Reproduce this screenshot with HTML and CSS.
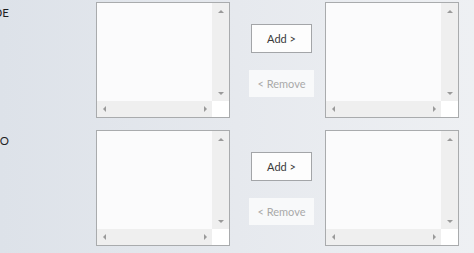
FILE: index.html
```html
<!DOCTYPE html>
<html>
<head>
<meta charset="utf-8">
<link rel="stylesheet" href="styles.css">
</head>
<body>
<div class="page">
  <div class="row">
    <div class="label"><div class="label-inner"><span class="label-text">CODE</span></div></div>
    <div class="listbox">
      <div class="list-area"></div>
      <div class="vscroll"><span class="arr up"></span><span class="arr down"></span></div>
      <div class="hscroll"><span class="arr left"></span><span class="arr right"></span></div>
      <div class="corner"></div>
    </div>
    <div class="buttons">
      <button class="btn btn-add">Add &gt;</button>
      <button class="btn btn-remove">&lt; Remove</button>
    </div>
    <div class="listbox">
      <div class="list-area"></div>
      <div class="vscroll"><span class="arr up"></span><span class="arr down"></span></div>
      <div class="hscroll"><span class="arr left"></span><span class="arr right"></span></div>
      <div class="corner"></div>
    </div>
  </div>
  <div class="row">
    <div class="label"><div class="label-inner"><span class="label-text">TODO</span></div></div>
    <div class="listbox">
      <div class="list-area"></div>
      <div class="vscroll"><span class="arr up"></span><span class="arr down"></span></div>
      <div class="hscroll"><span class="arr left"></span><span class="arr right"></span></div>
      <div class="corner"></div>
    </div>
    <div class="buttons">
      <button class="btn btn-add">Add &gt;</button>
      <button class="btn btn-remove">&lt; Remove</button>
    </div>
    <div class="listbox">
      <div class="list-area"></div>
      <div class="vscroll"><span class="arr up"></span><span class="arr down"></span></div>
      <div class="hscroll"><span class="arr left"></span><span class="arr right"></span></div>
      <div class="corner"></div>
    </div>
  </div>
</div>
</body>
</html>
```
FILE: styles.css
```css
html, body {
  margin: 0;
  padding: 0;
}
body {
  width: 474px;
  height: 253px;
  overflow: hidden;
  background: linear-gradient(to right, #dde2e9 0%, #e6e9ee 50%, #eef0f3 100%);
  font-family: Lato, "Open Sans", sans-serif;
  font-size: 11px;
  color: #222;
}
.page {
  display: flex;
  flex-direction: column;
  gap: 12px;
  padding-top: 2px;
}
.row {
  display: flex;
  align-items: stretch;
  height: 116px;
}
.label {
  width: 96px;
  flex: none;
  overflow: hidden;
  padding-top: 4px;
  box-sizing: border-box;
}
.label-inner {
  width: 9px;
  display: flex;
  justify-content: flex-end;
}
.label-text {
  flex: none;
  white-space: nowrap;
  font-size: 11.5px;
  line-height: 14px;
  color: #1e1e1e;
}
.listbox {
  width: 134px;
  height: 116px;
  flex: none;
  box-sizing: border-box;
  border: 1px solid #a9abad;
  background: #fafbfc;
  display: grid;
  grid-template-columns: 1fr 17px;
  grid-template-rows: 1fr 16px;
}
.list-area {
  background: #fbfbfc;
}
.vscroll {
  background: #efefef;
  display: flex;
  flex-direction: column;
  justify-content: space-between;
  align-items: center;
  padding: 7px 0 6px;
}
.hscroll {
  background: #efefef;
  display: flex;
  justify-content: space-between;
  align-items: center;
  padding: 0 5px 0 6px;
}
.corner {
  background: #ffffff;
}
.arr {
  width: 0;
  height: 0;
  display: block;
}
.arr.up {
  border-left: 3px solid transparent;
  border-right: 3px solid transparent;
  border-bottom: 3px solid #9a9a9a;
}
.arr.down {
  border-left: 3px solid transparent;
  border-right: 3px solid transparent;
  border-top: 3px solid #9a9a9a;
}
.arr.left {
  border-top: 3px solid transparent;
  border-bottom: 3px solid transparent;
  border-right: 3px solid #9a9a9a;
}
.arr.right {
  border-top: 3px solid transparent;
  border-bottom: 3px solid transparent;
  border-left: 3px solid #9a9a9a;
}
.buttons {
  width: 65px;
  flex: none;
  margin: 0 11px 0 19px;
  display: flex;
  flex-direction: column;
  justify-content: center;
  align-items: center;
  gap: 17px;
}
.btn {
  font-family: Lato, "Open Sans", sans-serif;
  font-size: 11px;
  font-weight: 400;
  padding: 0;
  margin: 0;
  box-sizing: border-box;
  cursor: default;
}
.btn-add {
  width: 61px;
  height: 29px;
  background: #fdfdfd;
  border: 1px solid #a3a5a8;
  color: #3a3a3a;
}
.btn-remove {
  width: 65px;
  height: 27px;
  background: #f8f9fa;
  border: none;
  color: #a9a9a9;
}
```
